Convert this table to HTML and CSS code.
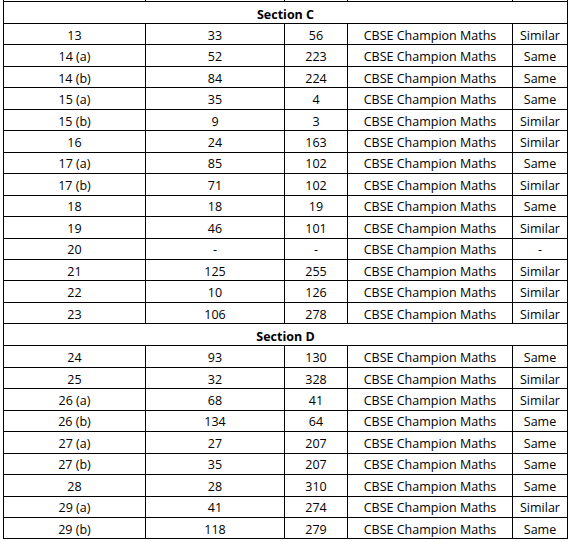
FILE: index.html
```html
<!DOCTYPE html>
<html>
<head>
<meta charset="utf-8">
<link rel="stylesheet" href="styles.css">
</head>
<body>
<table class="grid">
<colgroup><col class="c1"><col class="c2"><col class="c3"><col class="c4"><col class="c5"></colgroup>
<tbody>
<tr class="stub"><td></td><td></td><td></td><td></td><td></td></tr>
<tr class="sec"><td colspan="5">Section C</td></tr>
<tr><td>13</td><td>33</td><td>56</td><td>CBSE Champion Maths</td><td>Similar</td></tr>
<tr><td>14 (a)</td><td>52</td><td>223</td><td>CBSE Champion Maths</td><td>Same</td></tr>
<tr><td>14 (b)</td><td>84</td><td>224</td><td>CBSE Champion Maths</td><td>Same</td></tr>
<tr><td>15 (a)</td><td>35</td><td>4</td><td>CBSE Champion Maths</td><td>Same</td></tr>
<tr><td>15 (b)</td><td>9</td><td>3</td><td>CBSE Champion Maths</td><td>Similar</td></tr>
<tr><td>16</td><td>24</td><td>163</td><td>CBSE Champion Maths</td><td>Similar</td></tr>
<tr><td>17 (a)</td><td>85</td><td>102</td><td>CBSE Champion Maths</td><td>Same</td></tr>
<tr><td>17 (b)</td><td>71</td><td>102</td><td>CBSE Champion Maths</td><td>Similar</td></tr>
<tr><td>18</td><td>18</td><td>19</td><td>CBSE Champion Maths</td><td>Same</td></tr>
<tr><td>19</td><td>46</td><td>101</td><td>CBSE Champion Maths</td><td>Similar</td></tr>
<tr><td>20</td><td>-</td><td>-</td><td>CBSE Champion Maths</td><td>-</td></tr>
<tr><td>21</td><td>125</td><td>255</td><td>CBSE Champion Maths</td><td>Similar</td></tr>
<tr><td>22</td><td>10</td><td>126</td><td>CBSE Champion Maths</td><td>Similar</td></tr>
<tr><td>23</td><td>106</td><td>278</td><td>CBSE Champion Maths</td><td>Similar</td></tr>
<tr class="sec"><td colspan="5">Section D</td></tr>
<tr><td>24</td><td>93</td><td>130</td><td>CBSE Champion Maths</td><td>Same</td></tr>
<tr><td>25</td><td>32</td><td>328</td><td>CBSE Champion Maths</td><td>Similar</td></tr>
<tr><td>26 (a)</td><td>68</td><td>41</td><td>CBSE Champion Maths</td><td>Similar</td></tr>
<tr><td>26 (b)</td><td>134</td><td>64</td><td>CBSE Champion Maths</td><td>Same</td></tr>
<tr><td>27 (a)</td><td>27</td><td>207</td><td>CBSE Champion Maths</td><td>Same</td></tr>
<tr><td>27 (b)</td><td>35</td><td>207</td><td>CBSE Champion Maths</td><td>Same</td></tr>
<tr><td>28</td><td>28</td><td>310</td><td>CBSE Champion Maths</td><td>Same</td></tr>
<tr><td>29 (a)</td><td>41</td><td>274</td><td>CBSE Champion Maths</td><td>Similar</td></tr>
<tr><td>29 (b)</td><td>118</td><td>279</td><td>CBSE Champion Maths</td><td>Same</td></tr>
</tbody>
</table>
</body>
</html>
```

FILE: styles.css
```css
html, body {
  margin: 0;
  padding: 0;
  background: #fff;
}
body {
  padding-left: 3px;
  font-family: "Open Sans", "Liberation Sans", sans-serif;
  font-size: 12.5px;
  color: #000;
}
.grid {
  border-collapse: collapse;
  table-layout: fixed;
  width: 565px;
}
.c1 { width: 142px; }
.c2 { width: 139px; }
.c3 { width: 63px; }
.c4 { width: 165px; }
.c5 { width: 55px; }
.grid td {
  border: 1px solid #000;
  padding: 3px 0 0;
  height: 17.46px;
  line-height: 16px;
  text-align: center;
  vertical-align: middle;
  white-space: nowrap;
  overflow: hidden;
}
.grid tr.stub td {
  border-top: none;
  padding: 0;
  height: 1px;
}
.grid tr.sec td {
  padding-top: 4px;
  height: 17px;
  font-weight: 700;
}
```
